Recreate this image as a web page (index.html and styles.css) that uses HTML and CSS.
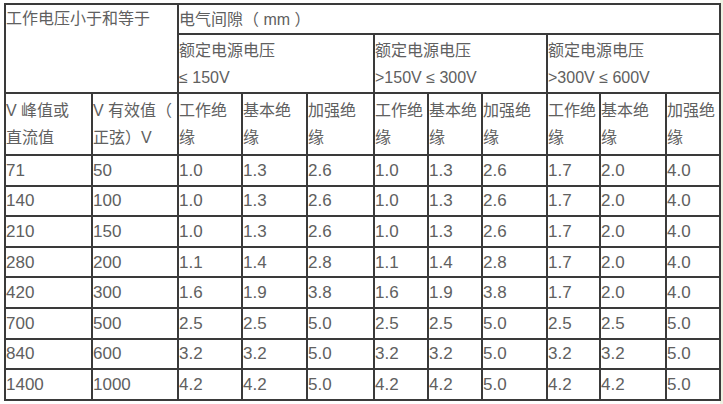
FILE: index.html
```html
<!DOCTYPE html>
<html lang="zh-CN">
<head>
<meta charset="utf-8">
<title>电气间隙</title>
<link rel="stylesheet" href="styles.css">
</head>
<body>
<div class="page">
<table class="spec">
<colgroup>
<col class="c1"><col class="c2"><col class="c3"><col class="c4"><col class="c5"><col class="c6"><col class="c7"><col class="c8"><col class="c9"><col class="c10"><col class="c11">
</colgroup>
<tr class="r1">
<td colspan="2" rowspan="2" class="top">工作电压小于和等于</td>
<td colspan="9">电气间隙（ mm ）</td>
</tr>
<tr class="r2">
<td colspan="3">额定电源电压<br>≤ 150V</td>
<td colspan="3">额定电源电压<br>&gt;150V ≤ 300V</td>
<td colspan="3">额定电源电压<br>&gt;300V ≤ 600V</td>
</tr>
<tr class="r3">
<td>V 峰值或<br>直流值</td>
<td>V 有效值（<br>正弦）V</td>
<td>工作绝<br>缘</td><td>基本绝<br>缘</td><td>加强绝<br>缘</td>
<td>工作绝<br>缘</td><td>基本绝<br>缘</td><td>加强绝<br>缘</td>
<td>工作绝<br>缘</td><td>基本绝<br>缘</td><td>加强绝<br>缘</td>
</tr>
<tr class="rd"><td>71</td><td>50</td><td>1.0</td><td>1.3</td><td>2.6</td><td>1.0</td><td>1.3</td><td>2.6</td><td>1.7</td><td>2.0</td><td>4.0</td></tr>
<tr class="rd"><td>140</td><td>100</td><td>1.0</td><td>1.3</td><td>2.6</td><td>1.0</td><td>1.3</td><td>2.6</td><td>1.7</td><td>2.0</td><td>4.0</td></tr>
<tr class="rd"><td>210</td><td>150</td><td>1.0</td><td>1.3</td><td>2.6</td><td>1.0</td><td>1.3</td><td>2.6</td><td>1.7</td><td>2.0</td><td>4.0</td></tr>
<tr class="rd"><td>280</td><td>200</td><td>1.1</td><td>1.4</td><td>2.8</td><td>1.1</td><td>1.4</td><td>2.8</td><td>1.7</td><td>2.0</td><td>4.0</td></tr>
<tr class="rd"><td>420</td><td>300</td><td>1.6</td><td>1.9</td><td>3.8</td><td>1.6</td><td>1.9</td><td>3.8</td><td>1.7</td><td>2.0</td><td>4.0</td></tr>
<tr class="rd"><td>700</td><td>500</td><td>2.5</td><td>2.5</td><td>5.0</td><td>2.5</td><td>2.5</td><td>5.0</td><td>2.5</td><td>2.5</td><td>5.0</td></tr>
<tr class="rd"><td>840</td><td>600</td><td>3.2</td><td>3.2</td><td>5.0</td><td>3.2</td><td>3.2</td><td>5.0</td><td>3.2</td><td>3.2</td><td>5.0</td></tr>
<tr class="rd"><td>1400</td><td>1000</td><td>4.2</td><td>4.2</td><td>5.0</td><td>4.2</td><td>4.2</td><td>5.0</td><td>4.2</td><td>4.2</td><td>5.0</td></tr>
</table>
</div>
</body>
</html>
```

FILE: styles.css
```css
html, body {
  margin: 0;
  padding: 0;
}
body {
  background: #edf2e3;
  width: 723px;
  height: 404px;
  overflow: hidden;
}
.page {
  background: #ffffff;
  width: 720px;
  height: 404px;
  padding: 3px 0 0 4px;
  box-sizing: border-box;
}
.spec {
  border-collapse: collapse;
  table-layout: fixed;
  width: 715px;
  font-family: "Liberation Sans", "Noto Sans CJK SC", sans-serif;
  font-size: 16px;
  line-height: 27px;
  color: #606060;
}
.spec td {
  border: 2px solid #3a3a3a;
  padding: 0;
  vertical-align: middle;
  text-align: left;
  white-space: nowrap;
  overflow: hidden;
}
.spec td.top {
  vertical-align: top;
}
.c1 { width: 87px; }
.c2 { width: 86px; }
.c3 { width: 64px; }
.c4 { width: 65px; }
.c5 { width: 67px; }
.c6 { width: 54px; }
.c7 { width: 54px; }
.c8 { width: 65px; }
.c9 { width: 53px; }
.c10 { width: 66px; }
.c11 { width: 54px; }
.r1 { height: 30px; }
.r2 { height: 59px; }
.r3 { height: 62px; }
.rd { height: 30.6px; font-size: 17px; }
```
